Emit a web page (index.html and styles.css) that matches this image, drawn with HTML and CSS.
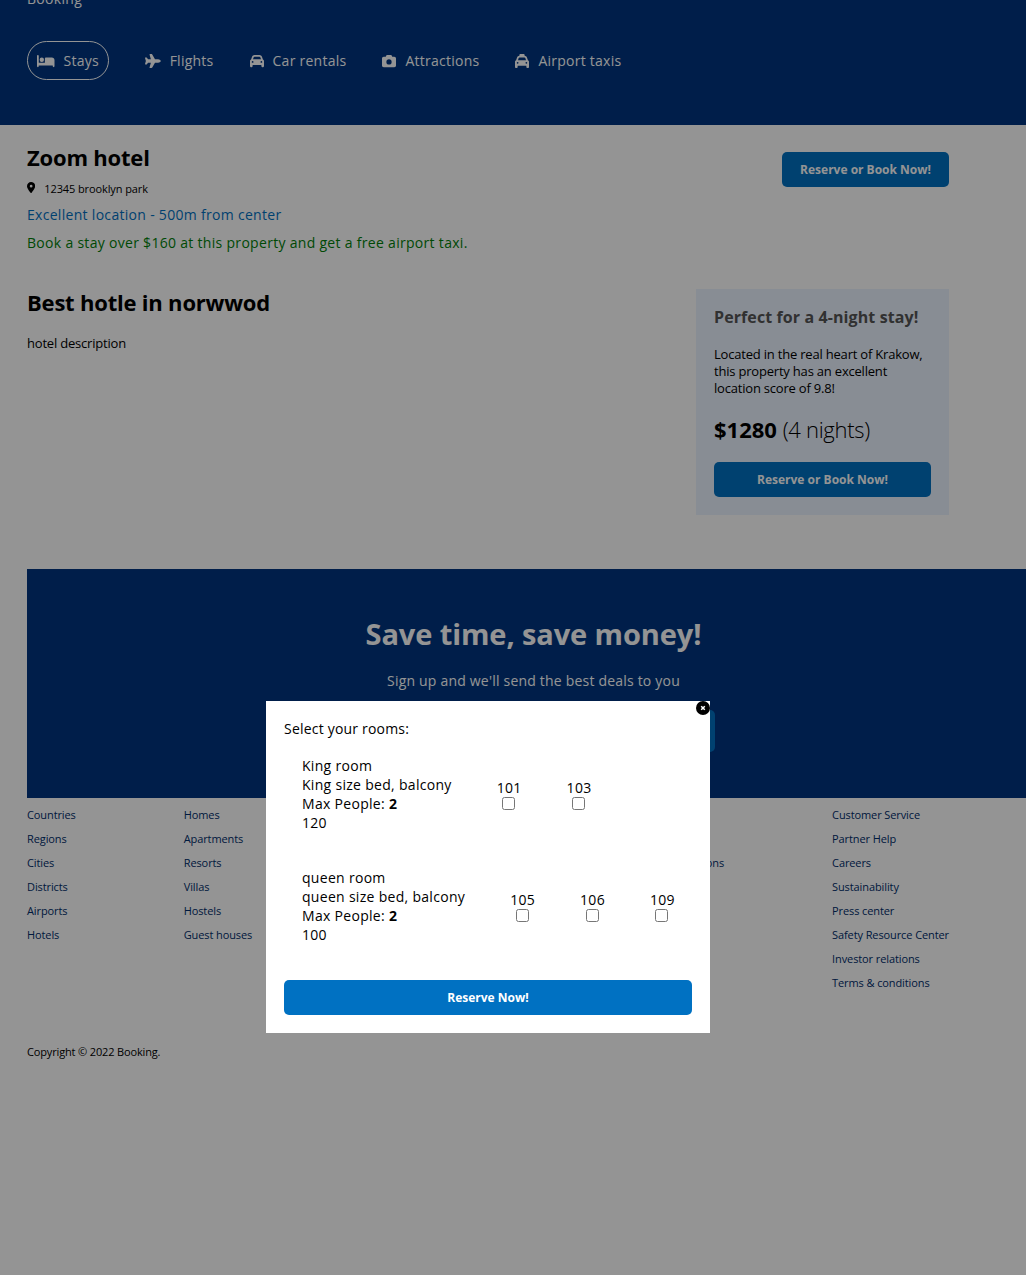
FILE: index.html
```html
<!DOCTYPE html>
<html lang="en">
<head>
    <meta charset="UTF-8">
    <meta name="viewport" content="width=device-width, initial-scale=1.0">
    <title>Zoom hotel</title>
    <link rel="stylesheet" href="styles.css">
</head>
<body>
    <!-- Header -->
    <header class="header">
        <div class="logo">Booking</div>
        <nav class="nav">
            <a class="nav-item active">
                <svg class="nav-icon" viewBox="0 0 640 512"><path d="M32 32c17.7 0 32 14.3 32 32V320H288V160c0-17.7 14.3-32 32-32H544c53 0 96 43 96 96V448c0 17.7-14.3 32-32 32s-32-14.3-32-32V416H352 320 64v32c0 17.7-14.3 32-32 32s-32-14.3-32-32V64C0 46.3 14.3 32 32 32zm144 96a80 80 0 1 1 0 160 80 80 0 1 1 0-160z"/></svg>
                <span>Stays</span>
            </a>
            <a class="nav-item">
                <svg class="nav-icon" viewBox="0 0 576 512"><path d="M482.3 192c34.2 0 93.7 29 93.7 64c0 36-59.5 64-93.7 64l-116.6 0L265.2 495.9c-5.7 10-16.3 16.1-27.8 16.1l-56.2 0c-10.6 0-18.3-10.2-15.4-20.4l49-171.6L112 320 68.8 377.6c-3 4-7.8 6.4-12.8 6.4l-42 0c-7.8 0-14-6.3-14-14c0-1.3 .2-2.6 .5-3.9L32 256 .5 145.9c-.4-1.3-.5-2.6-.5-3.9c0-7.8 6.3-14 14-14l42 0c5 0 9.8 2.4 12.8 6.4L112 192l102.9 0-49-171.6C162.9 10.2 170.6 0 181.2 0l56.2 0c11.5 0 22.1 6.2 27.8 16.1L365.7 192l116.6 0z"/></svg>
                <span>Flights</span>
            </a>
            <a class="nav-item">
                <svg class="nav-icon" viewBox="0 0 512 512"><path d="M135.2 117.4L109.1 192H402.9l-26.1-74.6C372.3 104.6 360.2 96 346.6 96H165.4c-13.6 0-25.7 8.6-30.2 21.4zM39.6 196.8L74.8 96.3C88.3 57.8 124.6 32 165.4 32H346.6c40.8 0 77.1 25.8 90.6 64.3l35.2 100.5c23.2 9.6 39.6 32.5 39.6 59.2V400v48c0 17.7-14.3 32-32 32H448c-17.7 0-32-14.3-32-32V400H96v48c0 17.7-14.3 32-32 32H32c-17.7 0-32-14.3-32-32V400 256c0-26.7 16.4-49.6 39.6-59.2zM128 288a32 32 0 1 0 -64 0 32 32 0 1 0 64 0zm288 32a32 32 0 1 0 0-64 32 32 0 1 0 0 64z"/></svg>
                <span>Car rentals</span>
            </a>
            <a class="nav-item">
                <svg class="nav-icon" viewBox="0 0 512 512"><path d="M149.1 64.8L138.7 96H64C28.7 96 0 124.7 0 160V416c0 35.3 28.7 64 64 64H448c35.3 0 64-28.7 64-64V160c0-35.3-28.7-64-64-64H373.3L362.9 64.8C356.4 45.2 338.1 32 317.4 32H194.6c-20.7 0-39 13.2-45.5 32.8zM256 192a96 96 0 1 1 0 192 96 96 0 1 1 0-192z"/></svg>
                <span>Attractions</span>
            </a>
            <a class="nav-item">
                <svg class="nav-icon" viewBox="0 0 512 512"><path d="M192 0c-17.7 0-32 14.3-32 32V64c0 .1 0 .1 0 .2c-38.6 2.2-72.3 27.3-85.2 64.1L39.6 228.8C16.4 238.4 0 261.3 0 288V432v48c0 17.7 14.3 32 32 32H64c17.7 0 32-14.3 32-32V432H416v48c0 17.7 14.3 32 32 32h32c17.7 0 32-14.3 32-32V432 288c0-26.7-16.4-49.6-39.6-59.2L437.2 128.3c-12.9-36.8-46.6-61.8-85.2-64.1c0-.1 0-.1 0-.2V32c0-17.7-14.3-32-32-32H192zM165.4 128H346.6c13.6 0 25.7 8.6 30.2 21.4L402.9 224H109.1l26.1-74.6c4.5-12.8 16.5-21.4 30.2-21.4zM64 320a32 32 0 1 1 64 0 32 32 0 1 1 -64 0zm352-32a32 32 0 1 1 0 64 32 32 0 1 1 0-64z"/></svg>
                <span>Airport taxis</span>
            </a>
        </nav>
    </header>

    <!-- Hotel details -->
    <main class="hotel">
        <div class="hotel-top">
            <div class="hotel-info">
                <h1 class="hotel-title">Zoom hotel</h1>
                <div class="hotel-address">
                    <svg class="pin-icon" viewBox="0 0 384 512"><path d="M215.7 499.2C267 435 384 279.4 384 192C384 86 298 0 192 0S0 86 0 192c0 87.4 117 243 168.3 307.2c12.3 15.3 35.1 15.3 47.4 0zM192 128a64 64 0 1 1 0 128 64 64 0 1 1 0-128z"/></svg>
                    <span>12345 brooklyn park</span>
                </div>
                <div class="hotel-distance">Excellent location - 500m from center</div>
                <div class="hotel-highlight">Book a stay over $160 at this property and get a free airport taxi.</div>
            </div>
            <button class="book-btn top-btn">Reserve or Book Now!</button>
        </div>

        <div class="hotel-details">
            <div class="details-text">
                <h2 class="details-title">Best hotle in norwwod</h2>
                <p class="details-desc">hotel description</p>
            </div>
            <div class="details-price">
                <h3 class="price-title">Perfect for a 4-night stay!</h3>
                <p class="price-text">Located in the real heart of Krakow, this property has an excellent location score of 9.8!</p>
                <div class="price-total"><b>$1280</b> <span>(4 nights)</span></div>
                <button class="book-btn">Reserve or Book Now!</button>
            </div>
        </div>
    </main>

    <!-- Mail list -->
    <section class="mail">
        <h2 class="mail-title">Save time, save money!</h2>
        <p class="mail-text">Sign up and we'll send the best deals to you</p>
        <div class="mail-form">
            <input class="mail-input" type="text" placeholder="Your Email">
            <button class="mail-btn">Subscribe</button>
        </div>
    </section>

    <!-- Footer -->
    <footer class="footer">
        <div class="footer-lists">
            <ul class="footer-list">
                <li>Countries</li>
                <li>Regions</li>
                <li>Cities</li>
                <li>Districts</li>
                <li>Airports</li>
                <li>Hotels</li>
            </ul>
            <ul class="footer-list">
                <li>Homes</li>
                <li>Apartments</li>
                <li>Resorts</li>
                <li>Villas</li>
                <li>Hostels</li>
                <li>Guest houses</li>
            </ul>
            <ul class="footer-list">
                <li>Unique places to stay</li>
                <li>Reviews</li>
                <li>Unpacked: Travel articles</li>
                <li>Travel communities</li>
                <li>Seasonal and holiday deals</li>
            </ul>
            <ul class="footer-list">
                <li>Car rental</li>
                <li>Flight Finder</li>
                <li>Restaurant reservations</li>
                <li>Travel Agents</li>
            </ul>
            <ul class="footer-list">
                <li>Customer Service</li>
                <li>Partner Help</li>
                <li>Careers</li>
                <li>Sustainability</li>
                <li>Press center</li>
                <li>Safety Resource Center</li>
                <li>Investor relations</li>
                <li>Terms &amp; conditions</li>
            </ul>
        </div>
        <div class="copyright">Copyright © 2022 Booking.</div>
    </footer>

    <!-- Room picker -->
    <div class="overlay">
        <div class="modal">
            <svg class="close-icon" viewBox="0 0 14 14"><circle cx="7" cy="7" r="7"/><path d="M5.2 5.2l3.6 3.6M8.8 5.2l-3.6 3.6" stroke="#fff" stroke-width="1.5"/></svg>
            <div class="modal-title">Select your rooms:</div>
            <div class="room">
                <div class="room-info">
                    <div>King room</div>
                    <div>King size bed, balcony</div>
                    <div>Max People: <b>2</b></div>
                    <div>120</div>
                </div>
                <div class="room-numbers">
                    <label class="room-number">101<input type="checkbox"></label>
                    <label class="room-number">103<input type="checkbox"></label>
                </div>
            </div>
            <div class="room">
                <div class="room-info">
                    <div>queen room</div>
                    <div>queen size bed, balcony</div>
                    <div>Max People: <b>2</b></div>
                    <div>100</div>
                </div>
                <div class="room-numbers">
                    <label class="room-number">105<input type="checkbox"></label>
                    <label class="room-number">106<input type="checkbox"></label>
                    <label class="room-number">109<input type="checkbox"></label>
                </div>
            </div>
            <button class="book-btn modal-btn">Reserve Now!</button>
        </div>
    </div>
</body>
</html>
```

FILE: styles.css
```css
* {
    box-sizing: border-box;
}

html, body {
    height: 100%;
}

body {
    margin: 0;
    overflow: hidden;
    font-family: "Open Sans", sans-serif;
    background-color: #fff;
    color: #000;
}

/* header */
.header {
    margin-top: -11px;
    height: 136px;
    padding-left: 27px;
    background-color: #003580;
    color: #fff;
}

.logo {
    font-size: 14px;
    font-weight: 500;
    line-height: 19px;
    letter-spacing: 0.3px;
}

.nav {
    display: flex;
    align-items: center;
    gap: 36px;
    margin-top: 33px;
}

.nav-item {
    display: flex;
    align-items: center;
    gap: 9px;
    font-size: 14px;
    letter-spacing: 0.25px;
}

.nav-item.active {
    height: 39px;
    padding: 0 9px;
    border: 1px solid #fff;
    border-radius: 20px;
}

.nav-icon {
    height: 14px;
    fill: #fff;
}

/* hotel */
.hotel {
    padding: 17px 0 0 27px;
    width: 949px;
}

.hotel-top {
    display: flex;
    justify-content: space-between;
    align-items: flex-start;
}

.hotel-info {
    display: flex;
    flex-direction: column;
    gap: 9px;
}

.hotel-title {
    margin: 0;
    font-size: 22px;
    line-height: 30px;
    font-weight: 700;
    letter-spacing: -0.2px;
}

.hotel-address {
    display: flex;
    align-items: center;
    gap: 9px;
    font-size: 11px;
    line-height: 15px;
    letter-spacing: -0.1px;
}

.pin-icon {
    height: 11px;
    margin-bottom: 2px;
}

.hotel-distance {
    font-size: 14px;
    line-height: 19px;
    letter-spacing: 0.3px;
    color: #0071c2;
}

.hotel-highlight {
    font-size: 14px;
    line-height: 19px;
    letter-spacing: 0.3px;
    color: #008009;
}

.book-btn {
    display: block;
    height: 35px;
    padding: 0 18px;
    border: none;
    border-radius: 5px;
    background-color: #0071c2;
    color: #fff;
    font-family: "Open Sans", sans-serif;
    font-size: 12px;
    font-weight: 700;
    cursor: pointer;
}

.top-btn {
    margin-top: 10px;
}

.hotel-details {
    display: flex;
    justify-content: space-between;
    align-items: flex-start;
    margin-top: 37px;
}

.details-title {
    margin: -2px 0 0;
    font-size: 22px;
    line-height: 30px;
    letter-spacing: -0.2px;
}

.details-desc {
    margin: 17px 0 0;
    font-size: 13px;
    line-height: 18px;
    letter-spacing: -0.2px;
}

.details-price {
    width: 253px;
    padding: 18px;
    background-color: #ebf3ff;
}

.price-title {
    margin: 0;
    font-size: 16px;
    line-height: 21px;
    letter-spacing: 0.1px;
    color: #555;
}

.price-text {
    margin: 18px 0 0;
    font-size: 13px;
    line-height: 17px;
    letter-spacing: -0.2px;
}

.price-total {
    margin-top: 18px;
    font-size: 22px;
    line-height: 29px;
}

.price-total span {
    font-weight: 300;
    letter-spacing: -0.3px;
}

.details-price .book-btn {
    width: 100%;
    margin-top: 18px;
}

/* mail list */
.mail {
    margin: 54px 0 0 27px;
    height: 229px;
    padding: 46px 0 0 14px;
    background-color: #003580;
    color: #fff;
    text-align: center;
}

.mail-title {
    margin: 0;
    font-size: 29px;
    line-height: 38px;
    letter-spacing: -0.1px;
}

.mail-text {
    margin: 18px 0 0;
    font-size: 14px;
    line-height: 19px;
    letter-spacing: 0.2px;
}

.mail-form {
    display: flex;
    justify-content: center;
    margin-top: 20px;
}

.mail-input {
    width: 268px;
    height: 42px;
    margin-right: 10px;
    padding: 0 10px;
    border: none;
    border-radius: 5px;
}

.mail-btn {
    height: 42px;
    width: 84px;
    border: none;
    border-radius: 5px;
    background-color: #0071c2;
    color: #fff;
}

/* footer */
.footer {
    padding: 5px 0 0 27px;
    width: 949px;
    font-size: 11px;
    letter-spacing: -0.1px;
}

.footer-lists {
    display: flex;
    justify-content: space-between;
}

.footer-list {
    margin: 0;
    padding: 0;
    list-style: none;
    color: #002d6b;
}

.footer-list li {
    height: 24px;
    line-height: 24px;
}

.copyright {
    margin-top: 49px;
    line-height: 15px;
    letter-spacing: -0.15px;
}

/* room picker */
.overlay {
    position: fixed;
    top: 0;
    left: 0;
    width: 100%;
    height: 100%;
    background-color: rgba(0, 0, 0, 0.42);
}

.modal {
    position: absolute;
    top: 701px;
    left: 266px;
    width: 444px;
    padding: 18px;
    background-color: #fff;
}

.close-icon {
    position: absolute;
    top: 0;
    right: 0;
    width: 14px;
    height: 14px;
}

.modal-title {
    font-size: 14px;
    line-height: 19px;
    letter-spacing: 0.2px;
}

.room {
    display: flex;
    align-items: center;
    gap: 45px;
    padding: 18px 0 18px 18px;
    font-size: 14px;
    line-height: 19px;
    letter-spacing: 0.3px;
}

.room-info {
    white-space: nowrap;
}

.room-numbers {
    display: flex;
    flex: none;
    gap: 45px;
}

.room-number {
    display: flex;
    flex-direction: column;
    align-items: center;
    padding-top: 1px;
    padding-bottom: 1px;
}

.room-number input {
    margin: 0 1px 0 0;
}

.modal-btn {
    width: 100%;
    margin-top: 18px;
}
```
